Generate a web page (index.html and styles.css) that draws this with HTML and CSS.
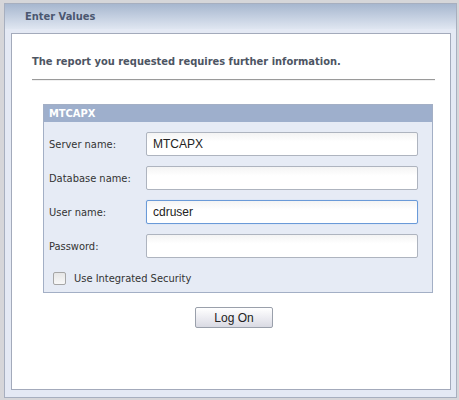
FILE: index.html
```html
<!DOCTYPE html>
<html lang="en">
<head>
    <meta charset="UTF-8">
    <title>Enter Values</title>
    <link rel="stylesheet" href="styles.css">
</head>
<body>
    <div class="dialog">
        <div class="titlebar">Enter Values</div>
        <div class="dialogbody">
            <div class="panel">
                <div class="intro">The report you requested requires further information.</div>
                <div class="rule"></div>
                <div class="group">
                    <div class="grouphead">MTCAPX</div>
                    <div class="row">
                        <label for="server">Server name:</label>
                        <input type="text" id="server" value="MTCAPX">
                    </div>
                    <div class="row">
                        <label for="database">Database name:</label>
                        <input type="text" id="database">
                    </div>
                    <div class="row">
                        <label for="user">User name:</label>
                        <input type="text" id="user" class="focused" value="cdruser">
                    </div>
                    <div class="row">
                        <label for="password">Password:</label>
                        <input type="password" id="password">
                    </div>
                    <div class="checkrow">
                        <span class="checkbox"></span>
                        <span>Use Integrated Security</span>
                    </div>
                </div>
                <div class="actions">
                    <button class="logon">Log On</button>
                </div>
            </div>
        </div>
    </div>
</body>
</html>
```
FILE: styles.css
```css
body {
    margin: 0;
    background: #d6d6d9;
    font-family: "DejaVu Sans Condensed", "DejaVu Sans", Verdana, sans-serif;
    font-stretch: condensed;
    font-size: 11px;
    color: #333;
}
.dialog {
    margin: 3px 2px 0 4px;
    height: 393px;
    border: 1px solid #a7afbf;
    background: #e4e9f4;
    display: flex;
    flex-direction: column;
}
.titlebar {
    height: 25px;
    line-height: 25px;
    padding-left: 20px;
    background: linear-gradient(to bottom, #a7b7cf, #dfe6f1);
    color: #4b5770;
    font-weight: bold;
    font-size: 11px;
}
.dialogbody {
    flex: 1;
    padding: 4px 5px 7px 6px;
    display: flex;
}
.panel {
    flex: 1;
    background: #fff;
    border: 1px solid #a3aabb;
    padding: 20px 15px 0 20px;
}
.intro {
    font-weight: bold;
    color: #4d5563;
    font-size: 11px;
    height: 16px;
    line-height: 16px;
}
.rule {
    margin-top: 9px;
    border-top: 1px solid #9a9a9a;
    border-bottom: 1px solid #f0f0f0;
}
.group {
    margin: 23px 2px 0 11px;
    border: 1px solid #a3afc5;
    background: #e6ebf5;
    padding-bottom: 7px;
}
.grouphead {
    height: 17px;
    line-height: 17px;
    background: #9eafcc;
    color: #fff;
    font-weight: bold;
    padding-left: 5px;
}
.row {
    display: flex;
    align-items: center;
    padding-left: 5px;
    margin-top: 10px;
}
.row:first-of-type {
    margin-top: 9px;
}
.row label {
    width: 97px;
    color: #333;
}
.row input {
    width: 272px;
    height: 24px;
    box-sizing: border-box;
    border: 1px solid #aeb4bf;
    border-radius: 2px;
    background: linear-gradient(to bottom, #f4f4f4, #fff 40%);
    font-family: "Liberation Sans", Arial, sans-serif;
    font-size: 12px;
    color: #222;
    padding: 0 6px;
    margin: 0;
}
.row input.focused {
    border-color: #6a9ad8;
    box-shadow: 0 0 1px #9cc0ee;
}
.checkrow {
    display: flex;
    align-items: center;
    padding-left: 9px;
    margin-top: 13px;
    height: 14px;
}
.checkbox {
    width: 11px;
    height: 11px;
    border: 1px solid #a6a6a6;
    border-radius: 2px;
    background: linear-gradient(to bottom, #e6e6e6, #f8f8f8);
    margin-right: 8px;
}
.actions {
    padding-left: 163px;
    margin-top: 14px;
}
.logon {
    width: 78px;
    height: 21px;
    border: 1px solid #9aa0ab;
    border-radius: 2px;
    background: linear-gradient(to bottom, #ffffff, #e9e9ef 60%, #d9dae3);
    font-family: "Liberation Sans", Arial, sans-serif;
    font-size: 12px;
    color: #222;
    padding: 0;
}
```
